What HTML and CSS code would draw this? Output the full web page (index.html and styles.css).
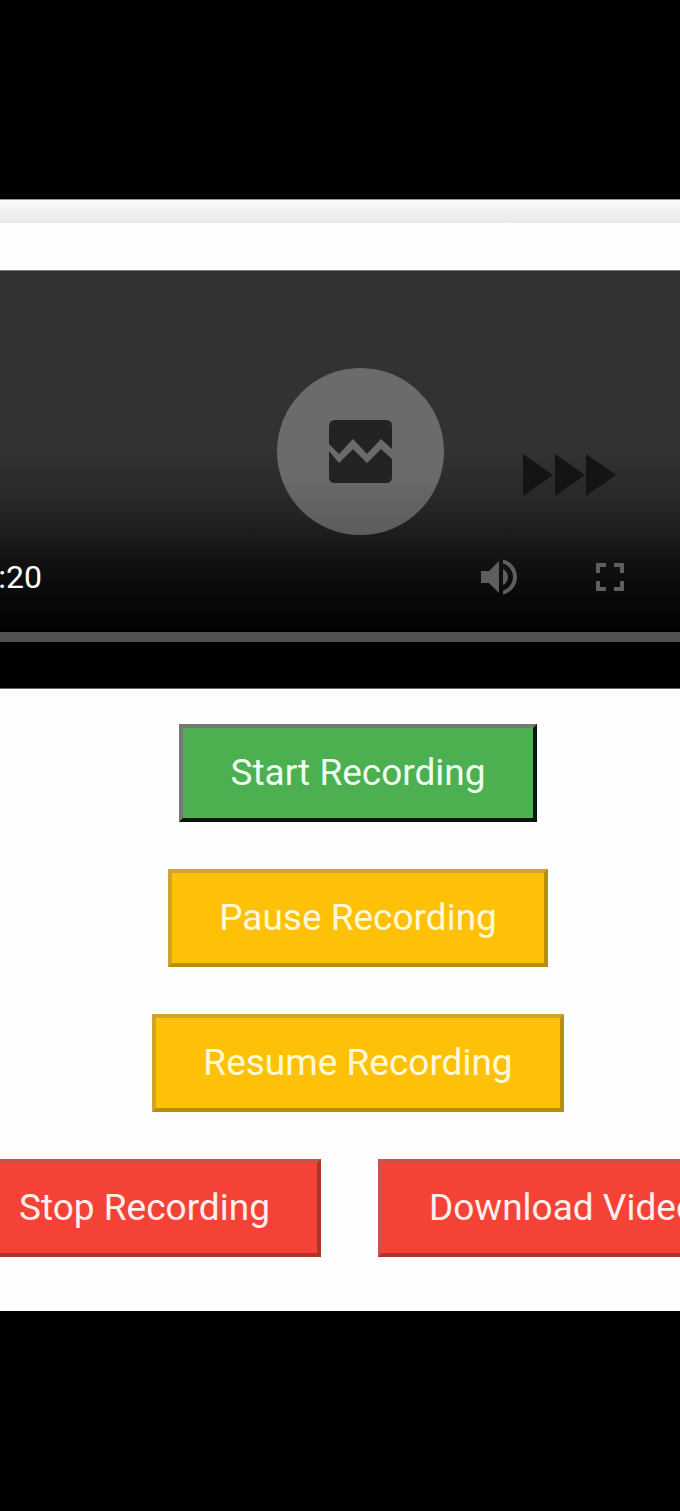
FILE: index.html
```html
<!DOCTYPE html>
<html lang="en">
<head>
<meta charset="utf-8">
<meta name="viewport" content="width=device-width, initial-scale=1">
<title>Screen Recorder</title>
<link rel="stylesheet" href="styles.css">
</head>
<body>
<main class="page">
  <div class="toolbar-edge"></div>
  <section class="player" aria-label="Video player">
    <div class="stage">
      <button class="play" type="button" aria-label="Playback unavailable">
        <svg class="play-icon" viewBox="0 0 63 63" aria-hidden="true">
          <path d="M6 0H57Q63 0 63 6V29L52 19L38 34L24 19L10 34L0 24V6Q0 0 6 0Z"/>
          <path d="M0 31L10 43L24 29L38 43L52 29L63 39V57Q63 63 57 63H6Q0 63 0 57Z"/>
        </svg>
      </button>
      <svg class="skip" viewBox="0 0 94 42" aria-hidden="true">
        <path d="M0 0L30 21L0 42ZM32 0L62 21L32 42ZM63 0L93 21L63 42Z"/>
      </svg>
    </div>
    <div class="controls">
      <span class="time">:20</span>
      <div class="icons">
        <button class="icon" type="button" aria-label="Mute">
          <svg viewBox="0 0 24 24" aria-hidden="true"><path d="M3 9v6h4l5 5V4L7 9H3zm13.500 3c0-1.770-1.020-3.290-2.500-4.030v8.050c1.480-.73 2.500-2.250 2.500-4.020zM14 3.230v2.060c2.890.86 5 3.540 5 6.710s-2.110 5.850-5 6.710v2.060c4.010-.91 7-4.490 7-8.770s-2.990-7.860-7-8.770z"/></svg>
        </button>
        <button class="icon" type="button" aria-label="Full screen">
          <svg viewBox="0 0 24 24" aria-hidden="true"><path d="M7 14H5v5h5v-2H7v-3zm-2-4h2V7h3V5H5v5zm12 7h-3v2h5v-5h-2v3zM14 5v2h3v3h2V5h-5z"/></svg>
        </button>
      </div>
    </div>
    <div class="timeline"></div>
  </section>
  <section class="actions" aria-label="Recording controls">
    <button class="btn start" type="button">Start Recording</button>
    <button class="btn pause" type="button">Pause Recording</button>
    <button class="btn pause" type="button">Resume Recording</button>
    <div class="row">
      <button class="btn stop" type="button">Stop Recording</button>
      <button class="btn stop" type="button">Download Video</button>
    </div>
  </section>
</main>
</body>
</html>
```
FILE: styles.css
```css
* {
  box-sizing: border-box;
}

body {
  margin: 0;
  padding: 199px 0 200px;
  background: #000;
  font-family: Roboto, "Liberation Sans", sans-serif;
  overflow-x: hidden;
}

.page {
  background: #fefefe;
  overflow: hidden;
}

.toolbar-edge {
  height: 24px;
  margin-bottom: 47px;
  border-top: 1px solid #999;
  background: linear-gradient(#fafafa, #e9e9e9);
}

.player {
  padding-bottom: 46px;
  border-top: 1px solid #777;
  border-bottom: 1px solid #666;
  background: linear-gradient(#323232 0, #323232 180px, #262626 236px, #101010 295px, #000 365px);
}

.stage {
  position: relative;
  display: flex;
  justify-content: center;
  padding: 97px 0 0 40px;
}

.play {
  display: grid;
  place-items: center;
  width: 167px;
  height: 167px;
  padding: 0;
  border: 0;
  border-radius: 50%;
  background: linear-gradient(#6b6b6b 60%, #5c5c5c);
}

.play-icon {
  width: 63px;
  height: 63px;
  fill: #232323;
}

.skip {
  position: absolute;
  right: 63px;
  bottom: 39px;
  width: 94px;
  height: 42px;
  fill: #141414;
}

.controls {
  display: flex;
  align-items: center;
  justify-content: space-between;
  height: 97px;
  padding: 0 46px 14px 0;
}

.time {
  display: flex;
  justify-content: flex-end;
  width: 42px;
  overflow: hidden;
  color: #fff;
  font-size: 32px;
  line-height: 40px;
}

.icons {
  display: flex;
  gap: 63px;
}

.icon {
  width: 48px;
  height: 48px;
  padding: 0;
  border: 0;
  background: none;
}

.icon svg {
  display: block;
  width: 100%;
  fill: #5e5e5e;
}

.timeline {
  height: 10px;
  background: #525252;
}

.actions {
  display: flex;
  flex-direction: column;
  align-items: center;
  gap: 47px;
  padding: 35px 0 54px 36px;
}

.row {
  display: flex;
  justify-content: center;
  gap: 57px;
  width: 100%;
}

.btn {
  flex: none;
  height: 98px;
  padding: 0 47px;
  border: 4px outset #000;
  border-radius: 0;
  color: #fff;
  font-family: inherit;
  font-size: 37px;
  line-height: 44px;
  white-space: nowrap;
}

.start {
  border-color: #777 #0c160c #0c160c #777;
  border-style: solid;
  background: #4caf50;
  color: #effff0;
}

.pause {
  border-color: #d0a527 #b98e0c #b98e0c #d0a527;
  border-style: solid;
  background: #ffc107;
  color: #fff9d8;
}

.stop {
  border-color: #c9524b #ac342c #ac342c #c9524b;
  border-style: solid;
  background: #f44336;
  color: #fff0ee;
}
```
